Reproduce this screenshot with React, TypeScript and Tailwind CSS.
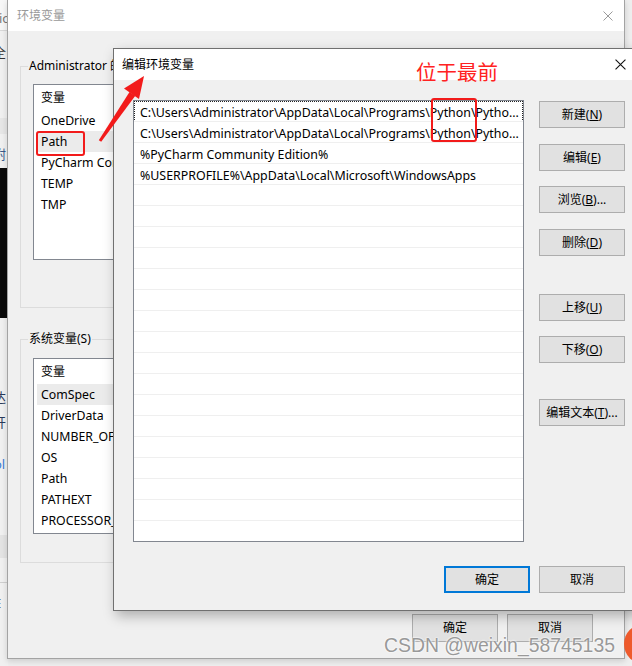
import React from "react";

function Btn({ children, className = "" }: { children: React.ReactNode; className?: string }) {
  return (
    <div
      className={`flex items-center justify-center bg-[#e1e1e1] text-[12px] leading-none text-black ${className}`}
    >
      {children}
    </div>
  );
}

function CloseX({ color, size = 10 }: { color: string; size?: number }) {
  return (
    <svg width={size} height={size} viewBox="0 0 10 10">
      <path d="M0.5 0.5 L9.5 9.5 M9.5 0.5 L0.5 9.5" stroke={color} strokeWidth="1" fill="none" />
    </svg>
  );
}

const userVars = ["OneDrive", "Path", "PyCharm Community Edition", "TEMP", "TMP"];
const sysVars = ["ComSpec", "DriverData", "NUMBER_OF_PROCESSORS", "OS", "Path", "PATHEXT", "PROCESSOR_ARCHITECTURE"];

const paths = [
  "C:\\Users\\Administrator\\AppData\\Local\\Programs\\Python\\Pytho...",
  "C:\\Users\\Administrator\\AppData\\Local\\Programs\\Python\\Pytho...",
  "%PyCharm Community Edition%",
  "%USERPROFILE%\\AppData\\Local\\Microsoft\\WindowsApps",
];

export default function App() {
  const emptyRows = Array.from({ length: 18 });
  return (
    <div className="relative w-[632px] h-[666px] overflow-hidden bg-[#eeeeee] font-['Noto_Sans','Noto_Sans_CJK_SC',sans-serif] text-black">
      {/* background window strip at far left */}
      <div className="absolute left-0 top-0 w-[8px] h-full overflow-hidden bg-[#f0f0f0]">
        <div className="h-[31px] bg-[#f7f7f7] border-b border-[#d8d8d8] relative">
          <span className="absolute left-[-1px] top-[10px] text-[13px] leading-[16px] text-[#777]">io</span>
        </div>
        <span className="absolute left-[-7px] top-[44px] text-[13px] leading-[16px] text-[#333]">全</span>
        <div className="absolute left-0 top-[118px] w-full h-[16px] bg-[#e6e6e6]" />
        <span className="absolute left-[-7px] top-[146px] text-[13px] leading-[16px] text-[#3a5a8a]">附</span>
        <div className="absolute left-0 top-[168px] w-full h-[150px] bg-[#0a0a0a]" />
        <span className="absolute left-[-7px] top-[389px] text-[13px] leading-[16px] text-[#2a3a5a]">达</span>
        <span className="absolute left-[-7px] top-[414px] text-[13px] leading-[16px] text-[#2a3a5a]">开</span>
        <span className="absolute left-[-6px] top-[456px] text-[13px] leading-[16px] text-[#3a7bd5]">ol</span>
        <div className="absolute left-0 top-[535px] w-full h-[23px] bg-[#e3e3e3]" />
        <div className="absolute left-0 top-[582px] w-full h-[1px] bg-[#cfcfcf]" />
        <span className="absolute left-[-6px] top-[595px] text-[13px] leading-[16px] text-[#555]">E</span>
      </div>

      {/* outer window 环境变量 */}
      <div className="absolute left-[7px] top-0 w-[618px] h-[659px] border-l border-r border-b border-[#a3a3a3] bg-[#f0f0f0] flex flex-col shadow-[0_2px_6px_rgba(0,0,0,0.15)]">
        <div className="h-[31px] bg-white flex items-center justify-between pl-[9px] pr-[11px] shrink-0">
          <span className="text-[12px] leading-[16px] text-[#999]">环境变量</span>
          <CloseX color="#9a9a9a" />
        </div>
        <div className="flex flex-col px-[12px]">
          <div className="relative mt-[35px] h-[242px] border border-[#dcdcdc]">
            <span className="absolute left-[7px] top-[-9px] bg-[#f0f0f0] px-[1px] text-[12px] leading-[16px] whitespace-nowrap">
              Administrator 的用户变量(U)
            </span>
            <div className="ml-[12px] mt-[17px] h-[176px] w-[500px] border border-[#828790] bg-white flex flex-col">
              <div className="h-[25px] pl-[7px] flex items-center text-[12px] leading-[16px]">变量</div>
              {userVars.map((v) => (
                <div
                  key={v}
                  className={`h-[21px] mx-[3px] pl-[4px] flex items-center text-[12.3px] leading-[16px] whitespace-nowrap ${
                    v === "Path" ? "bg-[#ebebeb]" : ""
                  }`}
                >
                  {v}
                </div>
              ))}
            </div>
          </div>
          <div className="relative mt-[31px] h-[224px] border border-[#dcdcdc]">
            <span className="absolute left-[7px] top-[-9px] bg-[#f0f0f0] px-[1px] text-[12px] leading-[16px] whitespace-nowrap">
              系统变量(S)
            </span>
            <div className="ml-[12px] mt-[18px] h-[176px] w-[500px] border border-[#828790] bg-white flex flex-col">
              <div className="h-[25px] pl-[7px] flex items-center text-[12px] leading-[16px]">变量</div>
              {sysVars.map((v, i) => (
                <div
                  key={v + i}
                  className={`h-[21px] mx-[3px] pl-[4px] flex items-center text-[12.3px] leading-[16px] whitespace-nowrap ${
                    i === 0 ? "bg-[#ebebeb]" : ""
                  }`}
                >
                  {v}
                </div>
              ))}
            </div>
          </div>
          <div className="mt-[51px] flex justify-end gap-[9px] pr-[19px]">
            <Btn className="w-[86px] h-[28px] border border-[#adadad]">确定</Btn>
            <Btn className="w-[86px] h-[28px] border border-[#adadad]">取消</Btn>
          </div>
        </div>
      </div>

      {/* edit dialog 编辑环境变量 */}
      <div className="absolute left-[113px] top-[48px] w-[532px] h-[563px] border border-[#707070] bg-[#f0f0f0] flex flex-col shadow-[3px_5px_12px_rgba(0,0,0,0.28)]">
        <div className="h-[31px] bg-white flex items-center justify-between pl-[8px] pr-[18px] shrink-0">
          <span className="text-[12px] leading-[16px]">编辑环境变量</span>
          <CloseX color="#111" size={11} />
        </div>
        <div className="flex pl-[19px] pt-[20px]">
          <div className="w-[391px] h-[442px] border border-[#828790] bg-white overflow-hidden flex flex-col">
            {paths.map((p, i) => (
              <div
                key={i}
                className="h-[21px] shrink-0 border-b border-[#efefef] relative flex items-center pl-[6px] pt-[3px] text-[12.4px] leading-[16px] whitespace-nowrap overflow-hidden"
              >
                {i === 0 && (
                  <div className="absolute left-0 top-0 right-0 bottom-[-1px] border border-dotted border-[#222]" />
                )}
                <span className="relative">{p}</span>
              </div>
            ))}
            {emptyRows.map((_, i) => (
              <div key={"e" + i} className="h-[21px] shrink-0 border-b border-[#efefef]" />
            ))}
          </div>
          <div className="ml-[15px] w-[86px] flex flex-col">
            <Btn className="mt-[1px] h-[27px] border border-[#adadad]">
              新建(<u>N</u>)
            </Btn>
            <Btn className="mt-[16px] h-[27px] border border-[#adadad]">
              编辑(<u>E</u>)
            </Btn>
            <Btn className="mt-[15px] h-[27px] border border-[#adadad]">
              浏览(<u>B</u>)...
            </Btn>
            <Btn className="mt-[16px] h-[27px] border border-[#adadad]">
              删除(<u>D</u>)
            </Btn>
            <Btn className="mt-[38px] h-[27px] border border-[#adadad]">
              上移(<u>U</u>)
            </Btn>
            <Btn className="mt-[15px] h-[27px] border border-[#adadad]">
              下移(<u>O</u>)
            </Btn>
            <Btn className="mt-[36px] h-[27px] border border-[#adadad]">
              编辑文本(<u>T</u>)...
            </Btn>
          </div>
        </div>
        <div className="flex pl-[330px] mt-[24px] gap-[9px]">
          <Btn className="w-[86px] h-[27px] border-2 border-[#0078d7]">确定</Btn>
          <Btn className="w-[86px] h-[27px] border border-[#adadad]">取消</Btn>
        </div>
      </div>

      {/* annotations */}
      <div className="absolute left-[36px] top-[131px] w-[49px] h-[25px] border-2 border-[#f21b1b] rounded-[3px]" />
      <div className="absolute left-[431px] top-[98px] w-[46px] h-[44px] border-2 border-[#f21b1b] rounded-[3px]" />
      <span className="absolute left-[416px] top-[58px] text-[20.5px] leading-[28px] text-[#ff2222] whitespace-nowrap">
        位于最前
      </span>
      <svg className="absolute left-0 top-0 pointer-events-none" width="632" height="666">
        <polygon points="98.8,140.2 101.2,141.8 135.3,95.8 129.5,91.9" fill="#f21b1b" />
        <polygon points="144,76 124,88.6 139,99" fill="#f21b1b" />
      </svg>

      {/* watermark & decoration */}
      <div className="absolute left-[624px] top-[624px] w-[40px] h-[40px] rounded-full bg-[#ee5a2c]" />
      <span className="absolute left-[384px] top-[634px] text-[19.4px] leading-[22px] font-['Liberation_Sans',sans-serif] text-[#999] whitespace-nowrap [text-shadow:0_0_2px_#fff,0_0_2px_#fff]">
        CSDN @weixin_58745135
      </span>
    </div>
  );
}
